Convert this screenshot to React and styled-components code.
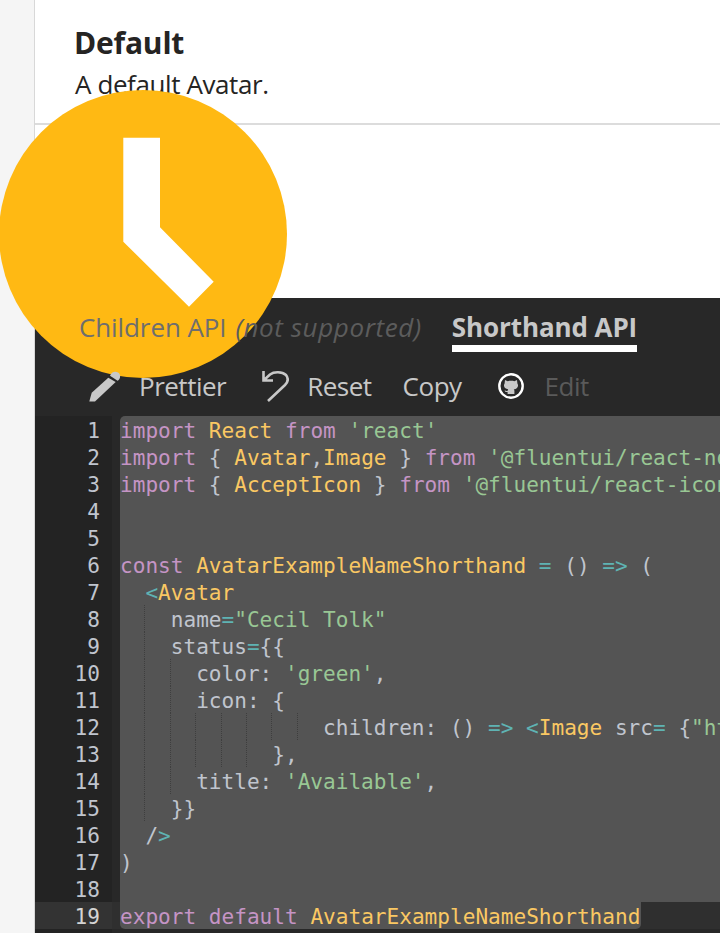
import React from "react";
import styled, { createGlobalStyle } from "styled-components";

const GlobalStyle = createGlobalStyle`
  html, body {
    margin: 0;
    padding: 0;
    background: #fff;
    overflow: hidden;
  }
`;

const Page = styled.div`
  position: relative;
  display: flex;
  width: 720px;
  height: 933px;
  overflow: hidden;
  font-family: "Open Sans", "Liberation Sans", sans-serif;
`;

const SideRail = styled.div`
  flex: 0 0 34px;
  background: #f5f5f5;
  border-right: 1px solid #d8d8d8;
`;

const Main = styled.main`
  flex: 1;
  min-width: 0;
  display: flex;
  flex-direction: column;
  background: #fff;
`;

const Header = styled.header`
  height: 125px;
  box-sizing: border-box;
  padding: 24px 0 0 39px;
  border-bottom: 2px solid #dcdcdc;
  flex: none;
`;

const Title = styled.h2`
  margin: 0;
  font-size: 30px;
  line-height: 38px;
  font-weight: 700;
  letter-spacing: -0.2px;
  color: #252423;
`;

const Description = styled.p`
  margin: 0;
  padding: 5px 0 0 1px;
  font-size: 26px;
  line-height: 34px;
  letter-spacing: -0.4px;
  color: #252423;
`;

const Preview = styled.div`
  height: 173px;
  flex: none;
`;

const Avatar = styled.svg`
  position: absolute;
  left: -1px;
  top: 90px;
  width: 288px;
  height: 288px;
  z-index: 1;
`;

const Panel = styled.section`
  flex: 1;
  display: flex;
  flex-direction: column;
  background: #282828;
`;

const Tabs = styled.div`
  position: relative;
  z-index: 2;
  height: 54px;
  flex: none;
  display: flex;
  align-items: flex-start;
  padding-left: 44px;
`;

const Tab = styled.div`
  height: 47px;
  margin-right: ${(p) => p.$gap || 0}px;
  font-size: 26px;
  line-height: 58px;
  letter-spacing: -0.1px;
  white-space: nowrap;
  color: ${(p) => (p.$active ? "#c8c8c8" : "#6e6e6e")};
  font-weight: ${(p) => (p.$active ? 700 : 400)};
  border-bottom: ${(p) => (p.$active ? "7px solid #fff" : "none")};
  em {
    margin-left: 9px;
    font-style: italic;
    letter-spacing: 0.6px;
    color: #5c5c5c;
  }
`;

const Toolbar = styled.div`
  position: relative;
  z-index: 2;
  height: 64px;
  box-sizing: border-box;
  padding: 4px 0 0 53px;
  flex: none;
  display: flex;
  align-items: center;
`;

const ToolIcon = styled.svg`
  flex: none;
  margin-right: ${(p) => p.$gap}px;
  display: block;
`;

const ToolLabel = styled.span`
  margin-right: ${(p) => p.$gap || 0}px;
  font-size: 26px;
  letter-spacing: -0.5px;
  white-space: nowrap;
  color: ${(p) => (p.$off ? "#5a5a5a" : "#c8c8c8")};
`;

const Editor = styled.div`
  flex: 1;
  min-height: 0;
  display: flex;
  font-family: "DejaVu Sans Mono", "Liberation Mono", monospace;
  font-size: 21.08px;
  line-height: 29px;
`;

const Gutter = styled.div`
  flex: 0 0 77px;
  background: #232323;
`;

const LineNumber = styled.div`
  height: 27px;
  overflow: hidden;
  padding-right: 12px;
  text-align: right;
  color: ${(p) => (p.$current ? "#d4d4d4" : "#c0c5ce")};
  background: ${(p) => (p.$current ? "#333" : "transparent")};
`;

const Code = styled.div`
  flex: 1;
  min-width: 0;
  background: #282828;
  padding-left: 8px;
`;

const Selection = styled.div`
  background: #545454;
  border-radius: 5px 0 0 0;
`;

const CodeLine = styled.div`
  height: 27px;
  white-space: pre;
  overflow: hidden;
  color: #c0c5ce;
`;

const LastRow = styled.div`
  height: 27px;
  display: flex;
  background: #2f2f2f;
  margin-left: -8px;
  padding-left: 8px;
`;

const LastLine = styled.div`
  background: #545454;
  white-space: pre;
  overflow: hidden;
  border-radius: 0 0 5px 5px;
  padding-right: 1px;
`;

const Guide = styled.span`
  display: inline-block;
  width: 1ch;
  height: 27px;
  vertical-align: top;
  box-sizing: border-box;
  ${(p) => p.$on && "border-left: 1px dotted #3e3e3e; margin: 0 1px 0 -1px;"}
`;

const Kw = styled.span`color: #c594c5;`;
const Id = styled.span`color: #fac863;`;
const Str = styled.span`color: #99c794;`;
const Op = styled.span`color: #5fb3b3;`;

// columns that carry an indent guide, by line number
const guides = {
  8: [2],
  9: [2],
  10: [2, 4],
  11: [2, 4],
  12: [2, 4, 6, 8, 10, 12, 14],
  13: [2, 4, 6, 8, 10],
  14: [2, 4],
  15: [2],
};

const Indent = ({ line }) => {
  const cols = guides[line] || [];
  const width = { 8: 4, 9: 4, 10: 6, 11: 6, 12: 16, 13: 12, 14: 6, 15: 4 }[line];
  return Array.from({ length: width }, (_, i) => (
    <Guide key={i} $on={cols.includes(i)} />
  ));
};

const lines = [
  <><Kw>import</Kw> <Id>React</Id> <Kw>from</Kw> <Str>'react'</Str></>,
  <><Kw>import</Kw> {"{ "}<Id>Avatar</Id>,<Id>Image</Id>{" } "}<Kw>from</Kw> <Str>'@fluentui/react-northstar'</Str></>,
  <><Kw>import</Kw> {"{ "}<Id>AcceptIcon</Id>{" } "}<Kw>from</Kw> <Str>'@fluentui/react-icons-northstar'</Str></>,
  "",
  "",
  <><Kw>const</Kw> <Id>AvatarExampleNameShorthand</Id> <Op>=</Op> () <Op>=&gt;</Op> (</>,
  <>{"  "}<Op>&lt;</Op><Id>Avatar</Id></>,
  <><Indent line={8} />name<Op>=</Op><Str>"Cecil Tolk"</Str></>,
  <><Indent line={9} />status<Op>=</Op>{"{{"}</>,
  <><Indent line={10} />color: <Str>'green'</Str>,</>,
  <><Indent line={11} />icon: {"{"}</>,
  <><Indent line={12} />children: () <Op>=&gt;</Op> <Op>&lt;</Op><Id>Image</Id> src<Op>=</Op> {"{"}<Str>"https://fabricweb.azureedge.net/</Str></>,
  <><Indent line={13} />{"},"}</>,
  <><Indent line={14} />title: <Str>'Available'</Str>,</>,
  <><Indent line={15} />{"}}"}</>,
  <>{"  /"}<Op>&gt;</Op></>,
  ")",
  "",
];

const App = () => (
  <>
    <GlobalStyle />
    <Page>
      <SideRail />
      <Main>
        <Header>
          <Title>Default</Title>
          <Description>A default Avatar.</Description>
        </Header>
        <Preview />
        <Panel>
          <Tabs>
            <Tab $gap={30}>Children API<em>(not supported)</em></Tab>
            <Tab $active>Shorthand API</Tab>
          </Tabs>
          <Toolbar>
            <ToolIcon $gap={18} width="33" height="32" viewBox="0 0 33 32">
              <path fill="#c8c8c8" d="M1.3 31.6 3.7 22.7 20.3 7.7 27.7 12 7 31.6z" />
              <path fill="#c8c8c8" d="M22 5.8C23 2.2 27 .6 30 2.4c3 2 2.8 6.2-.4 8.4z" />
            </ToolIcon>
            <ToolLabel $gap={36}>Prettier</ToolLabel>
            <ToolIcon $gap={18} width="27" height="32" viewBox="0 0 27 32">
              <path fill="none" stroke="#c8c8c8" strokeWidth="2.6" d="M1.5 1v9.5H11M1.5 10.5 8 4.5c4-3 12-3 16 .5 3 4 2 7-1 10L6 31" />
            </ToolIcon>
            <ToolLabel $gap={31}>Reset</ToolLabel>
            <ToolLabel $gap={36}>Copy</ToolLabel>
            <ToolIcon $gap={21} width="26" height="26" viewBox="0 0 26 26">
              <circle cx="13" cy="13" r="11.7" fill="none" stroke="#fff" strokeWidth="2.4" />
              <path fill="#c8c8c8" d="M7 7l2.6 1.2c2-.6 4.8-.6 6.8 0L19 7l.4 3.4c1 1.6.8 3.6-.4 4.6-.8.8-2 1.2-3.2 1.3.4.5.6 1 .6 1.7V21H9.6v-2c-1.6.4-2.6-.3-3-1.5.6 0 1.4.6 3 .6v-.4c0-.6.2-1.1.6-1.5-1.2-.1-2.4-.5-3.2-1.2-1.2-1-1.4-3-.4-4.6z" />
            </ToolIcon>
            <ToolLabel $off>Edit</ToolLabel>
          </Toolbar>
          <Editor>
            <Gutter>
              {Array.from({ length: 19 }, (_, i) => (
                <LineNumber key={i} $current={i === 18}>{i + 1}</LineNumber>
              ))}
            </Gutter>
            <Code>
              <Selection>
                {lines.map((l, i) => (
                  <CodeLine key={i}>{l}</CodeLine>
                ))}
              </Selection>
              <LastRow>
                <LastLine><Kw>export</Kw> <Kw>default</Kw> <Id>AvatarExampleNameShorthand</Id></LastLine>
              </LastRow>
            </Code>
          </Editor>
        </Panel>
      </Main>
      <Avatar viewBox="0 0 288 288">
        <circle cx="144" cy="144" r="144" fill="#ffb913" />
        <path fill="#fff" d="M124.3 47.7H161v89.6l53.7 54.4-24.7 25-65.7-65z" />
      </Avatar>
    </Page>
  </>
);

export default App;
